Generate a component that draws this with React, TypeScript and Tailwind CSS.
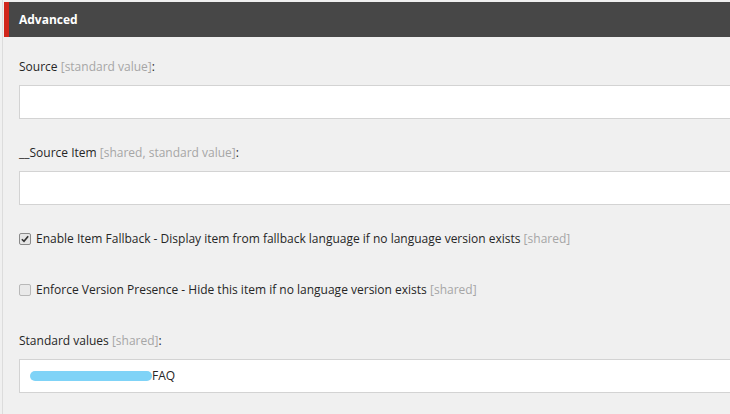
const font = { fontFamily: '"Open Sans", "Noto Sans", Arial, sans-serif' };

function FieldLabel({ name, note }: { name: string; note: string }) {
  return (
    <div className="h-[18px] text-[12px] leading-[18px] text-[#262626]">
      {name} <span className="text-[#a6a6a6]">[{note}]</span>:
    </div>
  );
}

function TextBox({ children }: { children?: React.ReactNode }) {
  return (
    <div className="h-[34px] -mr-4 border border-[#d3d3d3] bg-white flex items-center pl-[10px] text-[12px] text-[#262626]">
      {children}
    </div>
  );
}

function CheckRow({ checked, text, note }: { checked: boolean; text: string; note: string }) {
  return (
    <div className="flex items-center h-[18px] text-[12px] text-[#262626]">
      <span
        className={`w-[12px] h-[12px] mr-[5px] rounded-[2px] border flex items-center justify-center ${
          checked ? 'border-[#8a8a8a] bg-[#e6e6e6]' : 'border-[#b8b8b8] bg-[#e9e9e9]'
        }`}
      >
        {checked && (
          <svg viewBox="0 0 12 12" className="w-[10px] h-[10px]">
            <path d="M2.2 6.3 L4.8 8.8 L9.8 2.8" fill="none" stroke="#333" strokeWidth="2" />
          </svg>
        )}
      </span>
      <span>
        {text} <span className="text-[#a6a6a6]">[{note}]</span>
      </span>
    </div>
  );
}

export default function App() {
  return (
    <div className="w-[730px] h-[414px] overflow-hidden bg-[#f0f0f0]" style={font}>
      <div className="h-[414px] ml-[2px] border-l border-[#dcdcdc] pt-[2px]">
        <div className="h-[35px] bg-[#474747] flex items-center border-l-[5px] border-[#d1261b] ml-[1px]">
          <span className="pl-[10px] text-white font-bold text-[12px]">Advanced</span>
        </div>
        <div className="pl-[16px]">
          <div className="pt-[21px]">
            <FieldLabel name="Source" note="standard value" />
          </div>
          <div className="mt-[9px]">
            <TextBox />
          </div>
          <div className="mt-[25px]">
            <FieldLabel name="__Source Item" note="shared, standard value" />
          </div>
          <div className="mt-[9px]">
            <TextBox />
          </div>
          <div className="mt-[25px]">
            <CheckRow
              checked
              text="Enable Item Fallback - Display item from fallback language if no language version exists"
              note="shared"
            />
          </div>
          <div className="mt-[33px]">
            <CheckRow
              checked={false}
              text="Enforce Version Presence - Hide this item if no language version exists"
              note="shared"
            />
          </div>
          <div className="mt-[33px]">
            <FieldLabel name="Standard values" note="shared" />
          </div>
          <div className="mt-[9px]">
            <TextBox>
              <span className="inline-block w-[122px] h-[10px] rounded-full bg-[#7fd3f7] blur-[0.5px]" />
              <span>FAQ</span>
            </TextBox>
          </div>
        </div>
      </div>
    </div>
  );
}
